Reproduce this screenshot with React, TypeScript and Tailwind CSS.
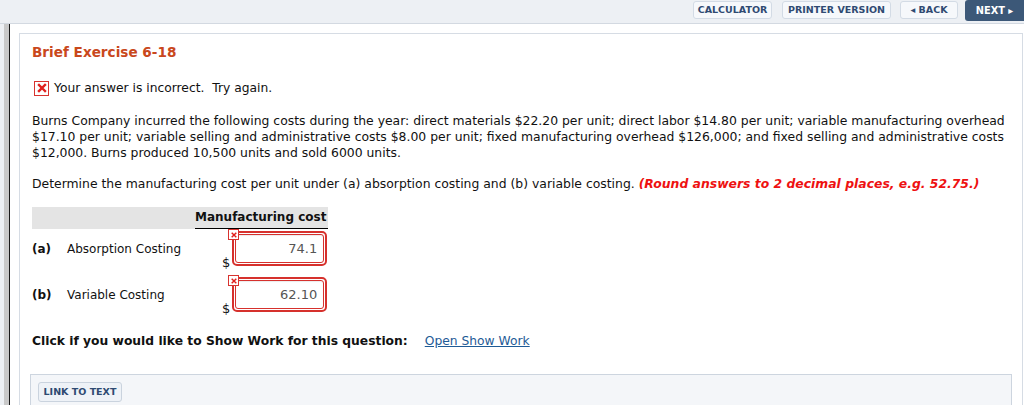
import React from 'react';

const TopButton: React.FC<{ label: React.ReactNode; w: string; dark?: boolean }> = ({ label, w, dark }) => (
    <div
        className={
            dark
                ? `${w} h-[21px] -mt-[1px] flex items-center justify-center rounded-l-[3px] bg-[#3c5878] text-white text-[9.8px] font-bold`
                : `${w} h-[18px] flex items-center justify-center rounded-[3px] border border-[#d3dbe5] bg-[#f6f8fb] text-[#2f4a72] text-[9.5px] font-bold`
        }
    >
        {label}
    </div>
);

const XMark: React.FC<{ size: number; className?: string }> = ({ size, className }) => (
    <div
        className={`flex items-center justify-center border border-[#d8332f] bg-white ${className ?? ''}`}
        style={{ width: size, height: size }}
    >
        <svg width={size - 5} height={size - 5} viewBox="0 0 10 10">
            <path d="M2 2 L8 8 M8 2 L2 8" stroke="#e0201c" strokeWidth="2.4" strokeLinecap="square" />
        </svg>
    </div>
);

const AnswerRow: React.FC<{ tag: string; label: string; value: string }> = ({ tag, label, value }) => (
    <div className="flex h-[46px] pt-[2px]">
        <div className="w-[163px] h-[35px] flex items-center">
            <span className="w-[35px] font-bold">{tag}</span>
            <span>{label}</span>
        </div>
        <div className="flex h-[35px] pl-[27px]">
            <span className="self-end leading-none translate-y-[3px] text-[13px]">$</span>
            <div className="relative ml-[2px] w-[95px] h-[35px] rounded-[5px] border-2 border-[#d6312d] p-[1px] bg-white">
                <div className="h-full rounded-[3px] border border-[#d6312d] flex items-center justify-end pr-[6px] text-[13px] text-[#555] shadow-[inset_0_1px_1px_rgba(0,0,0,0.08)]">
                    {value}
                </div>
                <XMark size={11} className="absolute -left-[6px] -top-[4px]" />
            </div>
        </div>
    </div>
);

export default function App() {
    return (
        <div className="w-[1024px] h-[405px] overflow-hidden bg-white font-['DejaVu_Sans',Verdana,sans-serif] text-[12.4px] leading-[16px] text-[#111]">
            {/* top toolbar */}
            <div className="h-[24px] bg-[#edf0f4] border-b border-[#d3d9e1] flex justify-end pt-[1px]">
                <TopButton label="CALCULATOR" w="w-[79px]" />
                <div className="w-[10px]" />
                <TopButton label="PRINTER VERSION" w="w-[109px]" />
                <div className="w-[9px]" />
                <TopButton label={<span>◂ BACK</span>} w="w-[58px]" />
                <div className="w-[7px]" />
                <TopButton label={<span>NEXT ▸</span>} w="w-[59px]" dark />
            </div>

            <div className="flex h-[381px]">
                {/* left frame edge */}
                <div className="w-[4px] bg-[#edf0f4]" />
                <div className="w-[5px] bg-[#c9c9c9]" />
                <div className="w-[1px] bg-[#1a1a1a]" />
                <div className="w-[9px]" />

                <div className="flex-1 pt-[9px] pr-[1px]">
                    <div className="h-[400px] border border-[#d6dce4] px-3 pt-[10px]">
                        <div className="text-[13.6px] font-bold text-[#c9481c]">Brief Exercise 6-18</div>

                        <div className="mt-[20px] flex items-center h-[16px]">
                            <XMark size={15} className="ml-[2px]" />
                            <span className="ml-[5px] text-[12.3px]">Your answer is incorrect.&nbsp; Try again.</span>
                        </div>

                        <p className="mt-[17px]">
                            Burns Company incurred the following costs during the year: direct materials $22.20 per unit; direct labor $14.80 per unit; variable manufacturing overhead $17.10 per unit; variable selling and administrative costs $8.00 per unit; fixed manufacturing overhead $126,000; and fixed selling and administrative costs $12,000. Burns produced 10,500 units and sold 6000 units.
                        </p>

                        <p className="mt-[15px]">
                            Determine the manufacturing cost per unit under (a) absorption costing and (b) variable costing.{' '}
                            <span className="font-bold italic text-[#ee1111]">(Round answers to 2 decimal places, e.g. 52.75.)</span>
                        </p>

                        <div className="mt-[15px] w-[296px] text-[12px]">
                            <div className="h-[22px] bg-[#e4e4e4] flex">
                                <div className="w-[163px]" />
                                <div className="flex-1 border-b border-black font-bold leading-[20px]">
                                    Manufacturing cost
                                </div>
                            </div>
                            <AnswerRow tag="(a)" label="Absorption Costing" value="74.1" />
                            <AnswerRow tag="(b)" label="Variable Costing" value="62.10" />
                        </div>

                        <div className="mt-[12px] flex items-center text-[12.3px]">
                            <span className="font-bold">Click if you would like to Show Work for this question:</span>
                            <span className="ml-[17px] text-[#1f5b96] underline">Open Show Work</span>
                        </div>

                        <div className="mt-[25px] -mx-[2px] h-[60px] border border-[#cdd5df] bg-[#f4f6f9] pl-[7px] pt-[7px]">
                            <div className="w-[84px] h-[20px] rounded-[3px] border border-[#cad3de] bg-[#eef2f7] flex items-center justify-center text-[9.5px] font-bold text-[#2e4a72]">
                                LINK TO TEXT
                            </div>
                        </div>
                    </div>
                </div>
            </div>
        </div>
    );
}
